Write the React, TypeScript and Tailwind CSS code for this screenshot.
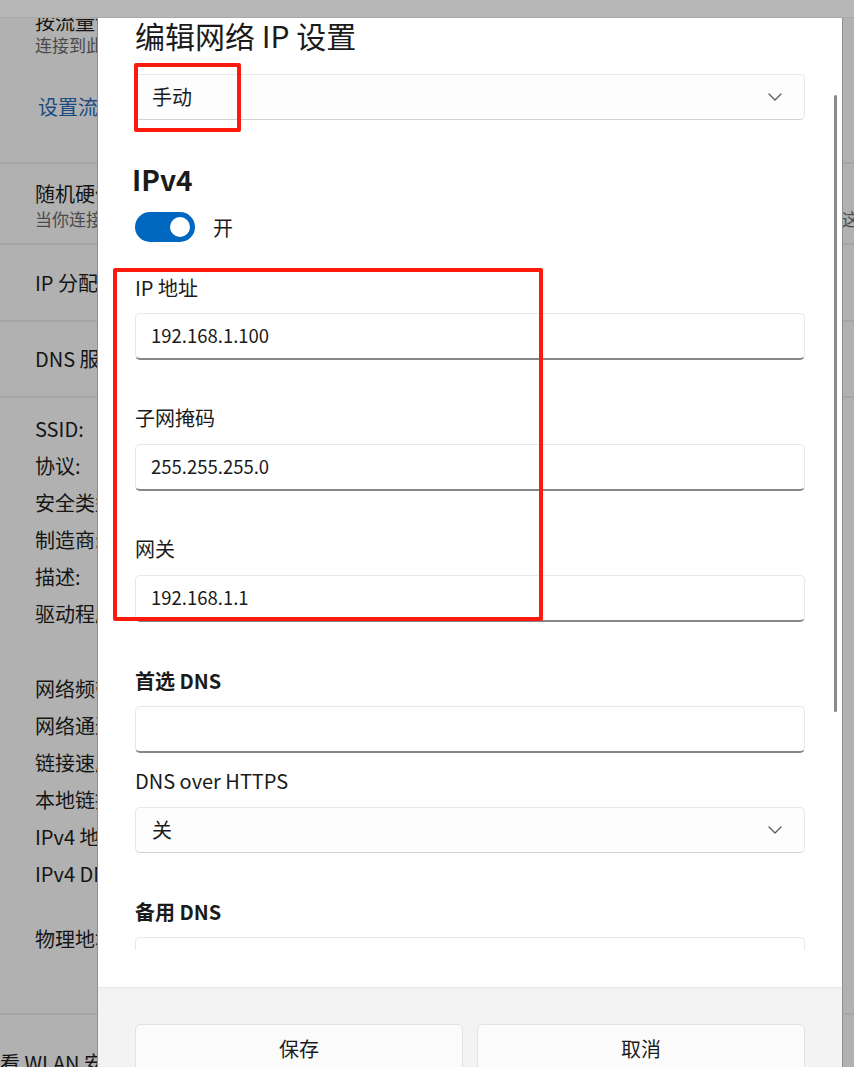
import React from "react";

const FONT = "font-[family-name:Noto_Sans_CJK_SC,Noto_Sans,sans-serif]";

function Chevron() {
  return (
    <svg width="14" height="8" viewBox="0 0 14 8" fill="none">
      <polyline points="1,1 7,7 13,1" stroke="#5a5a5a" strokeWidth="1.3" strokeLinejoin="round" strokeLinecap="round" />
    </svg>
  );
}

function TextInput({ value }: { value?: string }) {
  return (
    <div className="h-[47px] w-[670px] rounded-[5px] border border-[#e8e8e8] border-b-2 border-b-[#868686] bg-white flex items-center px-[15px] text-[18.5px] text-[#1b1b1b]">
      {value}
    </div>
  );
}

function Select({ value }: { value: string }) {
  return (
    <div className="h-[46px] w-[670px] rounded-[5px] border border-[#e8e8e8] border-b-[#d2d2d2] bg-[#fdfdfd] flex items-center justify-between pl-[16px] pr-[22px] text-[20px] text-[#1b1b1b]">
      <span>{value}</span>
      <Chevron />
    </div>
  );
}

function Label({ children, bold, className }: { children: React.ReactNode; bold?: boolean; className?: string }) {
  return (
    <div className={`h-[26px] leading-[26px] text-[20px] text-[#1b1b1b] ${bold ? "font-semibold" : ""} ${className ?? ""}`}>
      {children}
    </div>
  );
}

function Clip({ children, className }: { children: React.ReactNode; className?: string }) {
  return <div className={`w-[62px] overflow-hidden whitespace-nowrap ${className ?? ""}`}>{children}</div>;
}

function BgRow({ children }: { children: React.ReactNode }) {
  return (
    <Clip className="h-[37px] leading-[37px] text-[20px] text-[#151515]">{children}</Clip>
  );
}

export default function App() {
  return (
    <div className={`relative w-[854px] h-[1067px] overflow-hidden bg-[#b1b1b1] ${FONT}`}>
      {/* Background settings page (dimmed) */}
      <div className="flex flex-col">
        <div className="relative z-10 h-[18px] bg-[#b7b7b7] border-b border-[#a9a9a9]" />
        <div className="pl-[35px] h-[146px] border-b-2 border-[#a6a6a6] flex flex-col">
          <Clip className="-mt-[8px] h-[24px] leading-[24px] text-[20px] text-[#151515]">按流量计费的连接</Clip>
          <Clip className="h-[22px] leading-[22px] text-[17px] text-[#4a4a4a]">连接到此网络时</Clip>
          <Clip className="mt-[37px] pl-[3px] h-[28px] leading-[28px] text-[20px] text-[#1c4b80]">设置流量限制</Clip>
        </div>
        <div className="pl-[35px] h-[81px] border-b-2 border-[#a6a6a6] flex flex-col pt-[17px]">
          <Clip className="h-[26px] leading-[26px] text-[20px] text-[#151515]">随机硬件地址</Clip>
          <div className="h-[24px] leading-[24px] text-[17px] text-[#4a4a4a] flex justify-between">
            <Clip>当你连接到此网络时</Clip>
            <span className="w-[12px] overflow-hidden whitespace-nowrap">这</span>
          </div>
        </div>
        <div className="pl-[35px] h-[77px] border-b-2 border-[#a6a6a6] flex items-center text-[20px] text-[#151515]">
          <Clip>IP 分配:</Clip>
        </div>
        <div className="pl-[35px] h-[76px] border-b-2 border-[#a6a6a6] flex items-center text-[20px] text-[#151515]">
          <Clip>DNS 服务器分配:</Clip>
        </div>
        <div className="pl-[35px] pt-[12px] flex flex-col">
          <BgRow>SSID:</BgRow>
          <BgRow>协议:</BgRow>
          <BgRow>安全类型:</BgRow>
          <BgRow>制造商:</BgRow>
          <BgRow>描述:</BgRow>
          <BgRow>驱动程序版本:</BgRow>
          <div className="h-[38px]" />
          <BgRow>网络频带:</BgRow>
          <BgRow>网络通道:</BgRow>
          <BgRow>链接速度(接收/传输):</BgRow>
          <BgRow>本地链接 IPv6 地址:</BgRow>
          <BgRow>IPv4 地址:</BgRow>
          <BgRow>IPv4 DNS 服务器:</BgRow>
          <div className="h-[28px]" />
          <BgRow>物理地址(MAC):</BgRow>
        </div>
        <div className="mt-[56px] border-t-2 border-[#a6a6a6]" />
        <div className="mt-[34px] w-[97px] overflow-hidden whitespace-nowrap h-[28px] leading-[28px] text-[20px] text-[#151515]">
          <div className="-ml-[20px]">查看 WLAN 安全密钥</div>
        </div>
      </div>

      {/* Dialog */}
      <div className="absolute left-[97px] top-0 w-[746px] h-[1067px] bg-white border-x border-[#8f8f8f] flex flex-col text-[#1b1b1b]">
        <div className="relative shrink-0 h-[950px] overflow-hidden px-[37px] flex flex-col">
          <div className="pt-[15px] h-[55px] leading-[40px] text-[30px]">编辑网络 IP 设置</div>
          <div className="mt-[19px]">
            <Select value="手动" />
          </div>
          <div className="mt-[39px] h-[40px] leading-[40px] text-[28px] font-semibold -ml-[3px]">IPv4</div>
          <div className="mt-[13px] flex items-center gap-[18px]">
            <div className="h-[30px] w-[60px] rounded-full bg-[#0067c0] flex items-center justify-end pr-[5px]">
              <div className="h-[20px] w-[20px] rounded-full bg-white" />
            </div>
            <span className="text-[20px] leading-[26px] mt-[2px]">开</span>
          </div>
          <Label className="mt-[33px]">IP 地址</Label>
          <div className="mt-[12px]"><TextInput value="192.168.1.100" /></div>
          <Label className="mt-[45px]">子网掩码</Label>
          <div className="mt-[13px]"><TextInput value="255.255.255.0" /></div>
          <Label className="mt-[45px]">网关</Label>
          <div className="mt-[13px]"><TextInput value="192.168.1.1" /></div>
          <Label bold className="mt-[46px]">首选 DNS</Label>
          <div className="mt-[12px]"><TextInput /></div>
          <Label className="mt-[15px]">DNS over HTTPS</Label>
          <div className="mt-[13px]"><Select value="关" /></div>
          <Label bold className="mt-[46px]">备用 DNS</Label>
          <div className="mt-[12px] shrink-0"><TextInput /></div>

          {/* scrollbar */}
          <div className="absolute right-[5px] top-[95px] w-[3px] h-[617px] rounded-full bg-[#8a8a8a]" />
        </div>
        <div className="shrink-0 h-[37px] bg-white" />
        <div className="flex-1 min-h-0 overflow-hidden bg-[#f3f3f3] border-t border-[#e5e5e5] px-[37px] pt-[36px] flex gap-[14px]">
          <div className="shrink-0 h-[50px] w-[328px] rounded-[5px] border border-[#e3e3e3] bg-[#fbfbfb] flex items-center justify-center text-[20px]">保存</div>
          <div className="shrink-0 h-[50px] w-[328px] rounded-[5px] border border-[#e3e3e3] bg-[#fbfbfb] flex items-center justify-center text-[20px]">取消</div>
        </div>
      </div>

      {/* Red annotation boxes */}
      <div className="absolute left-[134px] top-[63px] w-[107px] h-[69px] border-4 border-[#fb1a0c] rounded-[2px]" />
      <div className="absolute left-[113px] top-[268px] w-[430px] h-[353px] border-4 border-[#fb1a0c] rounded-[2px]" />
    </div>
  );
}
